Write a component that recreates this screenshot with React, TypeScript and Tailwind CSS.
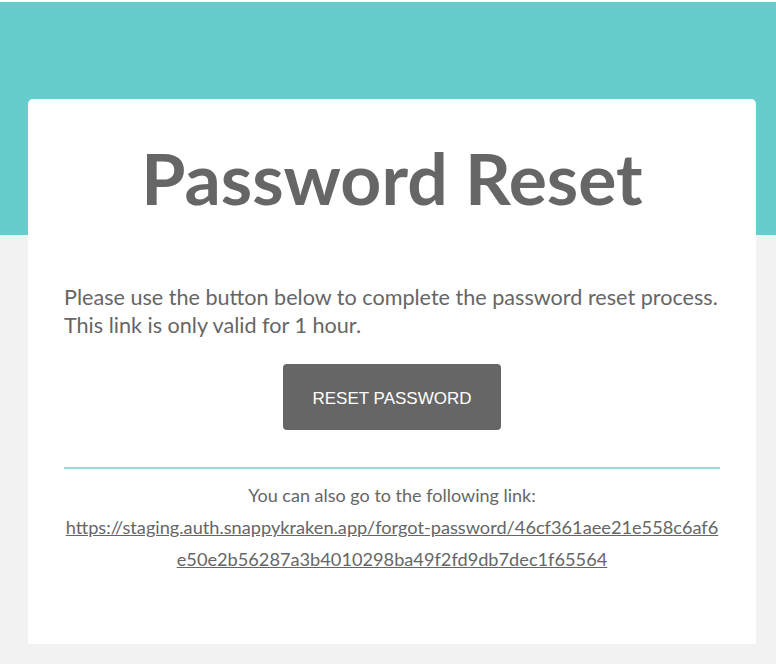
export default function App() {
  return (
    <div className="min-h-[664px] bg-[#f2f2f2] border-t-2 border-white font-['Lato','Liberation_Sans',sans-serif] text-[#666666]">
      {/* teal header band */}
      <div className="h-[233px] bg-[#66cccc]" />

      {/* card */}
      <div className="mx-[28px] -mt-[136px] w-[728px] bg-white rounded-t-[5px] px-[36px] pt-[42px] pb-[69px]">
        <h1 className="text-center text-[71.5px] leading-[72px] font-bold text-[#666666]">Password Reset</h1>

        <p className="mt-[70px] text-[21.6px] leading-[28px] text-[#666666]">
          Please use the button below to complete the password reset process.
          <br />
          This link is only valid for 1 hour.
        </p>

        <div className="mt-[25px] flex justify-center">
          <a className="flex h-[66px] w-[218px] items-center justify-center rounded-[4px] bg-[#666666] pt-[3px] text-[17px] text-white font-['Liberation_Sans',Arial,sans-serif]">
            RESET PASSWORD
          </a>
        </div>

        <hr className="mt-[37px] border-0 border-t-2 border-solid border-t-[#9adcdc]" />

        <div className="mt-[10px] text-center text-[18px] leading-[32px] text-[#666666]">
          <div>You can also go to the following link:</div>
          <a className="underline text-[18.2px]">
            https://staging.auth.snappykraken.app/forgot-password/46cf361aee21e558c6af6
            <br />
            e50e2b56287a3b4010298ba49f2fd9db7dec1f65564
          </a>
        </div>
      </div>
    </div>
  )
}
